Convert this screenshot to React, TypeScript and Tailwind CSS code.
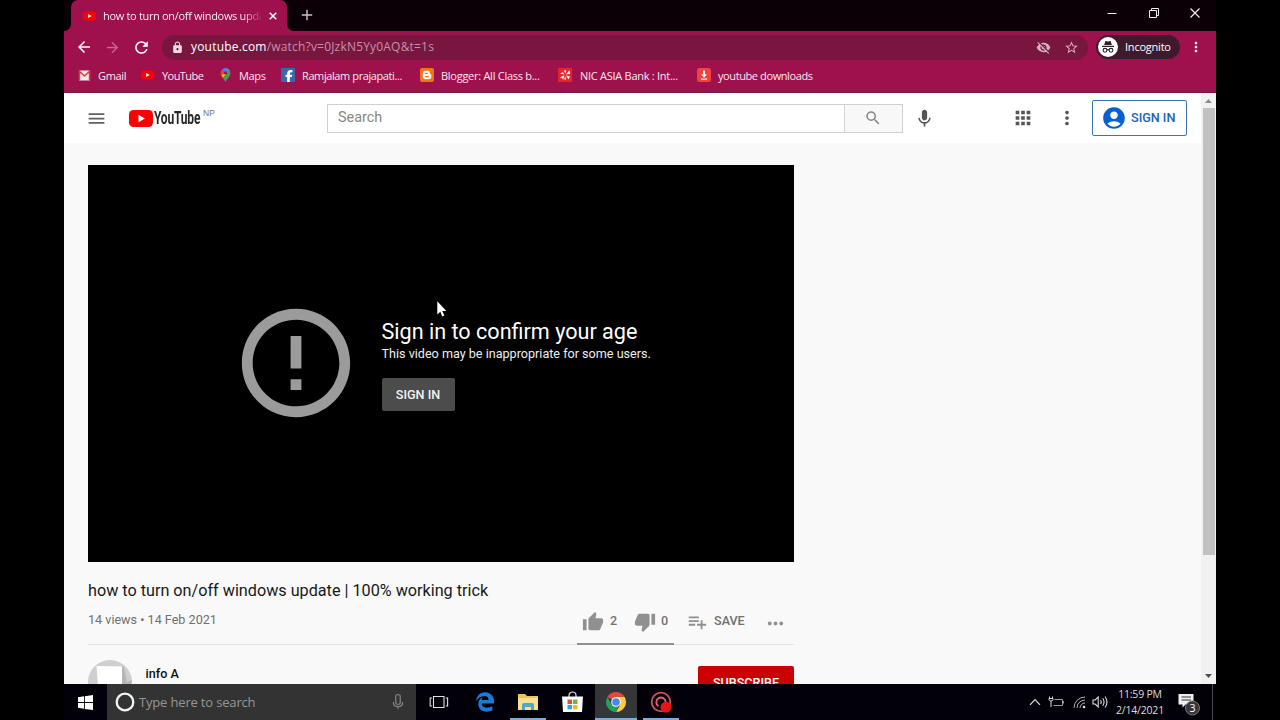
import type { ReactNode } from "react";
import {
  MdAccountCircle,
  MdApps,
  MdArrowBack,
  MdArrowForward,
  MdErrorOutline,
  MdLock,
  MdMenu,
  MdMic,
  MdMoreHoriz,
  MdMoreVert,
  MdPlaylistAdd,
  MdRefresh,
  MdSearch,
  MdStarBorder,
  MdThumbDown,
  MdThumbUp,
  MdVisibilityOff,
} from "react-icons/md";
import { FaEdgeLegacy, FaFacebookF } from "react-icons/fa6";

function PlayBadge({ className }: { className: string }) {
  return (
    <svg viewBox="0 0 24 17" className={className}>
      <rect width="24" height="17" rx="4.5" fill="#f00" />
      <path d="M9.5 4.8v7.4l6.4-3.7z" fill="#fff" />
    </svg>
  );
}

function GmailIcon() {
  return (
    <svg viewBox="0 0 14 12" className="h-[11px] w-[13px]">
      <rect x="1" y="0.5" width="12" height="11" rx="1" fill="#f3ebea" />
      <path d="M1.5 11V1.5L7 6.5l5.5-5V11" fill="none" stroke="#c9463f" strokeWidth="1.7" />
    </svg>
  );
}

function MapsIcon() {
  return (
    <svg viewBox="0 0 12 16" className="h-[14px] w-[11px]">
      <path d="M6 0a5.6 5.6 0 0 0-4.3 2L6 5.6 9.3 1A5.6 5.6 0 0 0 6 0z" fill="#4285f4" />
      <path d="M1.7 2A5.6 5.6 0 0 0 .4 5.6c0 1 .3 2 .7 2.8L6 5.6z" fill="#ea4335" />
      <path d="M1.1 8.4c.5 1 1.2 2 2 3L9.5 4 6 5.6z" fill="#fbbc04" />
      <path d="M11 3.2 3.1 11.4C4.4 13 5.2 14 6 16c1-3.5 5.6-6 5.6-10.4 0-.9-.2-1.7-.6-2.4z" fill="#34a853" />
      <path d="M9.3 1 6 5.6 11 3.2A5.6 5.6 0 0 0 9.3 1z" fill="#5a97f5" />
      <circle cx="6" cy="5.6" r="1.9" fill="#9c1a4c" />
    </svg>
  );
}

function FacebookIcon() {
  return (
    <span className="flex h-[14px] w-[14px] items-end justify-end bg-[#3b66ad] pr-[2px] text-white">
      <FaFacebookF className="h-[12px] w-[8px]" />
    </span>
  );
}

function BloggerIcon() {
  return (
    <svg viewBox="0 0 14 14" className="h-[14px] w-[14px]">
      <rect width="14" height="14" rx="2" fill="#f4731c" />
      <path
        d="M5.5 2.8h2.2a2.2 2.2 0 0 1 2.2 2.2v.7c0 .5.3.6.7.6.5 0 .7.3.7.7v1.6a2.7 2.7 0 0 1-2.7 2.7H5.5A2.7 2.7 0 0 1 2.8 8.600V5.500a2.700 2.700 0 0 1 2.700-2.700z"
        fill="#fff"
      />
      <path d="M5.5 5.400h1.800M5.500 8.600h3" stroke="#f4731c" strokeWidth="1.2" strokeLinecap="round" />
    </svg>
  );
}

function BankIcon() {
  return (
    <svg viewBox="0 0 14 14" className="h-[14px] w-[14px]">
      <rect width="14" height="14" fill="#e5252c" />
      <path d="M6 2.500 8.300 2.200 7.300 5.800z" fill="#fff" />
      <path d="M12 4.300 11.300 2.600 7.800 6.400 12 6z" fill="#fff" />
      <path d="M2 5.500 5 4.200 6.300 6.400z" fill="#fff" />
      <path d="M1.800 9.500 6.300 7.200 5.200 11.500 3.800 9.800z" fill="#fff" />
      <path d="M8 7.500 12 8.500 10.500 11.500zM7 8l1.200 3.500H6.300z" fill="#fff" />
    </svg>
  );
}

function DownloadIcon() {
  return (
    <svg viewBox="0 0 14 14" className="h-[14px] w-[14px]">
      <rect width="14" height="14" rx="2.5" fill="#f0433f" />
      <path d="M6 2.500h2v4h2L7 9.800 4 6.500h2zM4 10.600h6v1.100H4z" fill="#fff" />
    </svg>
  );
}

function IncognitoIcon() {
  return (
    <svg viewBox="0 0 20 20" className="h-5 w-5">
      <circle cx="10" cy="10" r="10" fill="#fff" />
      <path d="M7.300 4 10 4.600l2.700-.6 1.100 3.900H6.200zM4 8.700h12v1.200H4z" fill="#2b2029" />
      <g fill="none" stroke="#2b2029" strokeWidth="1.1">
        <circle cx="7" cy="13.300" r="1.900" />
        <circle cx="13" cy="13.300" r="1.900" />
        <path d="M8.900 13q1.100-.7 2.200 0" />
      </g>
    </svg>
  );
}

function TabStrip() {
  return (
    <div className="flex h-[31px] items-stretch bg-[#0b0005]">
      <svg viewBox="0 0 7 7" className="h-[7px] w-[7px] self-end">
        <path d="M7 0v7H0a7 7 0 0 0 7-7z" fill="#9e114c" />
      </svg>
      <div className="flex w-[216px] items-center rounded-t-[7px] bg-[#9e114c] pl-[12px]">
        <PlayBadge className="h-[10px] w-[13px]" />
        <span className="ml-[7px] w-[158px] overflow-hidden bg-linear-to-r from-white from-88% to-white/10 bg-clip-text text-[11px] leading-[17px] font-medium tracking-[-0.32px] whitespace-nowrap text-transparent">
          how to turn on/off windows update
        </span>
        <svg viewBox="0 0 8 8" className="ml-[8px] h-[8px] w-[8px]">
          <path d="M.7.7l6.6 6.6M7.3.7.7 7.3" stroke="#fff" strokeWidth="1.5" />
        </svg>
      </div>
      <svg viewBox="0 0 7 7" className="h-[7px] w-[7px] self-end">
        <path d="M0 0v7h7a7 7 0 0 1-7-7z" fill="#9e114c" />
      </svg>
      <svg viewBox="0 0 12 12" className="mb-px ml-[7px] h-[12px] w-[12px] self-center">
        <path d="M6 .8v10.400M.8 6h10.400" stroke="#c9c5c8" strokeWidth="1.4" />
      </svg>
      <div className="ml-auto flex items-center pr-[16px] pb-[5px]">
        <svg viewBox="0 0 10 10" className="h-[10px] w-[10px]">
          <path d="M.5 5.500h9" stroke="#eee" />
        </svg>
        <svg viewBox="0 0 10 10" className="ml-[32px] h-[10px] w-[10px]" fill="none" stroke="#eee">
          <path d="M.5 2.500h7v7h-7zM2.500 2.500v-2h7v7h-2" />
        </svg>
        <svg viewBox="0 0 10 10" className="ml-[31px] h-[10px] w-[10px]">
          <path d="M.5.5l9 9M9.500.5l-9 9" stroke="#eee" strokeWidth="1.2" />
        </svg>
      </div>
    </div>
  );
}

function Toolbar() {
  return (
    <div className="flex h-[32px] items-center pl-[11px] text-white">
      <MdArrowBack className="h-[18px] w-[18px]" />
      <MdArrowForward className="ml-[11px] h-[17px] w-[17px] text-[#c9668f]" />
      <MdRefresh className="ml-[11px] h-[19px] w-[19px]" />
      <div className="ml-[11px] flex h-[25px] w-[926px] items-center rounded-full bg-[#78163f] pr-[9px] pl-[9px]">
        <MdLock className="h-[13px] w-[13px] text-[#eddbe3]" />
        <span className="ml-[7px] text-[12px] leading-[18px] tracking-[0.19px] whitespace-nowrap text-[#c491a8]">
          <span className="text-white">youtube.com</span>/watch?v=0JzkN5Yy0AQ&amp;t=1s
        </span>
        <MdVisibilityOff className="ml-auto h-[15px] w-[15px] text-[#d5b0c0]" />
        <MdStarBorder className="ml-[13px] h-[15px] w-[15px] text-[#d5b0c0]" />
      </div>
      <div className="ml-[8px] flex h-[24px] w-[84px] items-center rounded-full bg-[#3f1a2e] pl-[2px]">
        <IncognitoIcon />
        <span className="ml-[7px] text-[11px] leading-[16px] font-medium tracking-[-0.22px]">Incognito</span>
      </div>
      <MdMoreVert className="ml-[8px] h-[16px] w-[16px]" />
    </div>
  );
}

type BookmarkProps = { icon: ReactNode; label: string; box: string; gap: string; tracking: string };

const bookmarks: BookmarkProps[] = [
  { icon: <GmailIcon />, label: "Gmail", box: "w-[63px]", gap: "w-[20px]", tracking: "tracking-[-0.35px]" },
  { icon: <PlayBadge className="h-[10px] w-[13px]" />, label: "YouTube", box: "w-[79px]", gap: "w-[21px]", tracking: "tracking-[-0.55px]" },
  { icon: <MapsIcon />, label: "Maps", box: "w-[61px]", gap: "w-[19px]", tracking: "tracking-[-0.35px]" },
  { icon: <FacebookIcon />, label: "Ramjalam prajapati...", box: "w-[139px]", gap: "w-[21px]", tracking: "tracking-[-0.4px]" },
  { icon: <BloggerIcon />, label: "Blogger: All Class b...", box: "w-[138px]", gap: "w-[21px]", tracking: "tracking-[-0.27px]" },
  { icon: <BankIcon />, label: "NIC ASIA Bank : Int...", box: "w-[139px]", gap: "w-[22px]", tracking: "tracking-[-0.27px]" },
  { icon: <DownloadIcon />, label: "youtube downloads", box: "w-[130px]", gap: "w-[21px]", tracking: "tracking-[-0.4px]" },
];

function BookmarksBar() {
  return (
    <div className="flex h-[30px] items-center border-b border-[#7d1340] pb-[5px] pl-[14px] text-[11px] leading-[17px] font-medium text-[#f7e9ef]">
      {bookmarks.map((b) => (
        <div key={b.label} className={`flex shrink-0 items-center ${b.box}`}>
          <span className={`flex shrink-0 items-center ${b.gap}`}>{b.icon}</span>
          <span className={`whitespace-nowrap ${b.tracking}`}>{b.label}</span>
        </div>
      ))}
    </div>
  );
}

function SiteHeader() {
  return (
    <header className="flex h-[50px] shrink-0 items-center bg-white pl-[22px]">
      <MdMenu className="h-[21px] w-[21px] text-[#606060]" />
      <PlayBadge className="ml-[22px] h-[17px] w-[24px]" />
      <span className="ml-[1px] w-[49px] origin-left scale-x-[0.65] text-[18.5px] leading-[20px] font-bold tracking-[-0.3px] whitespace-nowrap text-[#282828]">
        YouTube
      </span>
      <span className="mt-[-10px] w-[12px] font-['Liberation_Sans',sans-serif] text-[8.5px] leading-[10px] text-[#707070]">NP</span>
      <div className="ml-[112px] flex h-[29px] w-[576px] border border-[#d0d0d0]">
        <span className="flex-1 pl-[10px] text-[14.4px] leading-[26px] text-[#888]">Search</span>
        <span className="flex w-[58px] items-center justify-center border-l border-[#d3d3d3] bg-[#f8f8f8] pr-[2px]">
          <MdSearch className="h-[18px] w-[18px] text-[#888]" />
        </span>
      </div>
      <MdMic className="ml-[11px] h-[21px] w-[21px] text-[#555]" />
      <MdApps className="ml-[77px] h-[22px] w-[22px] text-[#555]" />
      <MdMoreVert className="ml-[22px] h-[22px] w-[22px] text-[#555]" />
      <div className="ml-[14px] flex h-[36px] w-[95px] items-center rounded-[2px] border border-[#3b73b5] pl-[8px] text-[#1b62b8]">
        <MdAccountCircle className="h-[26px] w-[26px] text-[#065fd4]" />
        <span className="ml-[4px] text-[12.6px] leading-[16px] font-medium whitespace-nowrap">SIGN IN</span>
      </div>
    </header>
  );
}

function Player() {
  return (
    <section className="relative flex h-[397px] w-[706px] items-center bg-black pl-[142px]">
      <MdErrorOutline className="mb-px ml-[0.5px] h-[130px] w-[130px] shrink-0 text-[#9b9b9b]" />
      <div className="ml-[21px] flex flex-col items-start pt-[1px] text-white">
        <h2 className="text-[21.6px] leading-[27px] whitespace-nowrap">Sign in to confirm your age</h2>
        <p className="mt-[1px] text-[12.6px] leading-[16px] whitespace-nowrap text-[#eee]">
          This video may be inappropriate for some users.
        </p>
        <button className="mt-[16px] h-[33px] w-[73px] rounded-[2px] bg-[#4c4c4c] text-[12.6px] leading-[33px] font-medium text-[#f3f3f3]">
          SIGN IN
        </button>
      </div>
      <svg viewBox="0 0 10 16" className="absolute top-[136px] left-[349px] h-[16px] w-[10px]">
        <path d="M.3.3v13.2l3-2.800 2 4.700 2-.9-2-4.500h4z" fill="#fff" />
      </svg>
    </section>
  );
}

function VideoInfo() {
  return (
    <div className="w-[706px]">
      <h1 className="mt-[17px] text-[16.2px] leading-[23px] whitespace-nowrap text-[#181818]">
        how to turn on/off windows update | 100% working trick
      </h1>
      <div className="flex h-[43px] items-stretch border-b border-[#e4e4e4] text-[#707070]">
        <span className="pt-[9px] text-[12.6px] leading-[18px] whitespace-nowrap">14 views • 14 Feb 2021</span>
        <div className="-mb-px ml-auto flex w-[97px] items-center border-b-2 border-[#909090] pb-[2px] pl-[5px] text-[12.6px] font-medium">
          <MdThumbUp className="h-[22px] w-[22px] text-[#909090]" />
          <span className="ml-[6px] w-[20px]">2</span>
          <MdThumbDown className="ml-[4px] h-[22px] w-[22px] text-[#909090]" />
          <span className="ml-[5px]">0</span>
        </div>
        <div className="flex w-[120px] items-center pb-[3px] pl-[12px] text-[12.6px] font-medium">
          <MdPlaylistAdd className="h-[22px] w-[22px] text-[#909090]" />
          <span className="ml-[6px]">SAVE</span>
          <MdMoreHoriz className="mt-[3px] ml-[19px] h-[23px] w-[23px] shrink-0 text-[#909090]" />
        </div>
      </div>
      <div className="flex pt-[15px]">
        <svg viewBox="0 0 44 44" className="h-[44px] w-[44px] shrink-0">
          <circle cx="22" cy="22" r="22" fill="#cfcfcf" />
          <path d="M8.500 6 34 6.500V26H10z" fill="#fff" />
          <path d="M34 6.500h1.500L39 22l5-2-2 6h-8z" fill="#b5b5b5" />
        </svg>
        <span className="mt-[6px] ml-[13.5px] text-[12.6px] leading-[16px] font-medium text-[#111]">info A</span>
        <button className="mt-[6px] ml-auto h-[33px] w-[96px] rounded-[2px] bg-[#c00] text-[12.6px] leading-[33px] font-medium text-white">
          SUBSCRIBE
        </button>
      </div>
    </div>
  );
}

function Scrollbar() {
  return (
    <div className="flex w-[15px] shrink-0 flex-col items-center bg-[#f1f1f1]">
      <svg viewBox="0 0 15 15" className="h-[15px] w-[15px]">
        <path d="M4 10h7L7.500 6z" fill="#8b8b8b" />
      </svg>
      <div className="h-[447px] w-[12px] bg-[#c1c1c1]" />
      <svg viewBox="0 0 15 15" className="mt-auto h-[15px] w-[15px]">
        <path d="M4 5h7L7.500 9z" fill="#505050" />
      </svg>
    </div>
  );
}

function FolderIcon() {
  return (
    <svg viewBox="0 0 20 16" className="h-[16px] w-[20px]">
      <path d="M0 0h7l2 2h11v14H0z" fill="#eec35b" />
      <path d="M0 4h20v12H0z" fill="#fbe08f" />
      <path d="M4 16v-5q0-2 2-2h8q2 0 2 2v5h-3v-3H7v3z" fill="#4fa7d0" />
    </svg>
  );
}

function StoreIcon() {
  return (
    <svg viewBox="0 0 21 21" className="h-[21px] w-[21px]">
      <path d="M7 6V4.500a3.500 3.500 0 0 1 7 0V6" fill="none" stroke="#ddd" strokeWidth="1.2" />
      <path d="M0 5.500h21L20 21H1z" fill="#fff" />
      <path d="M5.500 8.500h4.500v4.500H5.500z" fill="#e5502c" />
      <path d="M11 8.500h4.500v4.500H11z" fill="#76b43a" />
      <path d="M5.500 14h4.500v4.300H5.500z" fill="#2e9fe0" />
      <path d="M11 14h4.500v4.300H11z" fill="#f5b51b" />
    </svg>
  );
}

function ChromeIcon() {
  return (
    <svg viewBox="0 0 20 20" className="h-[20px] w-[20px]">
      <path d="M10 10 1.340 5A10 10 0 0 1 18.660 5z" fill="#dd4b3e" />
      <path d="M10 10V5h8.660A10 10 0 0 1 10 20l4.300-7.500z" fill="#fccd3f" />
      <path d="M1.340 5 5.700 12.500 10 14.500l2.500-.5L10 20A10 10 0 0 1 1.340 5z" fill="#23a05a" />
      <circle cx="10" cy="10" r="4.800" fill="#fff" />
      <circle cx="10" cy="10" r="3.800" fill="#4587ee" />
    </svg>
  );
}

function RecorderIcon() {
  return (
    <svg viewBox="0 0 24 24" className="h-[24px] w-[24px]">
      <circle cx="12" cy="12" r="9.300" fill="none" stroke="#d6505c" strokeWidth="1.8" />
      <path d="M9.500 16.200A4.700 4.700 0 1 1 16.700 12" fill="none" stroke="#e0606a" strokeWidth="1.9" />
      <circle cx="17" cy="17.200" r="5.500" fill="#e81414" />
    </svg>
  );
}

function TaskButton({ children, frame }: { children: ReactNode; frame: string }) {
  return <div className={`flex h-full shrink-0 items-center justify-center border-b-2 pt-[2px] ${frame}`}>{children}</div>;
}

function Taskbar() {
  return (
    <div className="flex h-[36px] shrink-0 items-center bg-[#02010a]">
      <div className="flex w-[43px] justify-center">
        <svg viewBox="0 0 16 16" className="h-[15px] w-[15px]" fill="#fff">
          <path d="M0 2.300 6.500 1.400v6.100H0zM7.400 1.300 16 0v7.500H7.400zM0 8.400h6.500v6.200L0 13.700zM7.400 8.400H16V16l-8.600-1.200z" />
        </svg>
      </div>
      <div className="flex h-full w-[309px] items-center bg-[#333] pl-[8px]">
        <svg viewBox="0 0 20 20" className="h-[20px] w-[20px]">
          <circle cx="10" cy="10" r="8.300" fill="none" stroke="#f4f4f4" strokeWidth="2.3" />
        </svg>
        <span className="ml-[4px] text-[13px] leading-[18px] tracking-[-0.17px] whitespace-nowrap text-[#969696]">
          Type here to search
        </span>
        <svg viewBox="0 0 12 16" className="mr-[12px] ml-auto h-[16px] w-[12px]" fill="none" stroke="#8d8d8d" strokeWidth="1.1">
          <rect x="3.800" y=".8" width="4.400" height="9.400" rx="1.200" />
          <path d="M1.500 8v1.500q0 3 4.500 3t4.500-3V8M6 12.500V15" />
        </svg>
      </div>
      <TaskButton frame="w-[45px] border-transparent">
        <svg viewBox="0 0 20 14" className="h-[14px] w-[20px]" fill="none" stroke="#e0e0e0" strokeWidth="1.1">
          <path d="M4.500 1.500h10.500v11H4.500zM3 3H1.200v8H3M16.800 3h1.800v8h-1.800" />
        </svg>
      </TaskButton>
      <TaskButton frame="w-[47px] border-transparent">
        <FaEdgeLegacy className="h-[20px] w-[20px] text-[#1a7ad9]" />
      </TaskButton>
      <TaskButton frame="ml-[2px] w-[36px] border-[#78aee0]">
        <FolderIcon />
      </TaskButton>
      <TaskButton frame="w-[49px] border-transparent pb-[2px] pl-[3px]">
        <StoreIcon />
      </TaskButton>
      <TaskButton frame="w-[42px] border-[#78aee0] bg-[#34363a]">
        <ChromeIcon />
      </TaskButton>
      <TaskButton frame="ml-[6px] w-[36px] border-[#78aee0]">
        <RecorderIcon />
      </TaskButton>
      <div className="ml-auto flex h-full items-center text-[#ddd]">
        <svg viewBox="0 0 12 8" className="h-[8px] w-[12px]" fill="none" stroke="currentColor" strokeWidth="1.2">
          <path d="M1 6.800 6 1.500l5 5.300" />
        </svg>
        <svg viewBox="0 0 16 12" className="ml-[7px] h-[12px] w-[16px]" fill="none" stroke="currentColor">
          <path d="M6.500 3.500h8v6h-9M14.500 5.500h1v2" strokeOpacity=".7" />
          <path d="M1.500.5v2M4.500.5v2M3 5v6" />
          <path d="M1 2.500h4v1.200L3.800 5H2.200L1 3.700z" />
        </svg>
        <svg viewBox="0 0 13 13" className="ml-[9px] h-[13px] w-[13px]" fill="none" stroke="currentColor">
          <path d="M1 12A11 11 0 0 1 12 1M4 12a8 8 0 0 1 8-8M7 12a5 5 0 0 1 5-5" strokeOpacity=".8" />
          <circle cx="11" cy="11" r="1.300" fill="currentColor" stroke="none" />
        </svg>
        <svg viewBox="0 0 17 14" className="ml-[6px] h-[14px] w-[17px]" fill="none" stroke="currentColor" strokeWidth="1.1">
          <path d="M1 5h2.200l3-3v10l-3-3H1zM8.500 5q1.400 2 0 4M10.800 3.300q2.500 3.700 0 7.400M13 1.500q4 5.500 0 11" />
        </svg>
        <div className="ml-[5px] flex w-[52px] flex-col items-center text-[10.5px] leading-[16px] tracking-[-0.2px] whitespace-nowrap">
          <span>11:59 PM</span>
          <span>2/14/2021</span>
        </div>
        <svg viewBox="0 0 24 24" className="mt-[3px] ml-[12px] h-[24px] w-[24px]">
          <path d="M.5 2h15v10.500H7.500L4.500 15.500v-3h-4z" fill="#f0f0f0" />
          <path d="M3.500 5h9.500M3.500 8h9.500" stroke="#333" />
          <circle cx="14.500" cy="16" r="7" fill="#37373b" stroke="#777" />
          <text x="14.500" y="20" textAnchor="middle" fontSize="10.500" fill="#fff">3</text>
        </svg>
        <div className="ml-[10px] h-full w-[4px] border-l border-[#4a4a4e]" />
      </div>
    </div>
  );
}

export default function App() {
  return (
    <div className="flex h-[720px] w-[1280px] justify-center overflow-hidden bg-black">
      <div className="flex w-[1152px] flex-col font-['Open_Sans','Noto_Sans',sans-serif]">
        <TabStrip />
        <div className="bg-[#9e114c]">
          <Toolbar />
          <BookmarksBar />
        </div>
        <div className="flex h-[591px] overflow-hidden bg-[#f9f9f9] font-['Roboto',sans-serif]">
          <div className="flex flex-1 flex-col">
            <SiteHeader />
            <main className="pt-[22px] pl-[24px]">
              <Player />
              <VideoInfo />
            </main>
          </div>
          <Scrollbar />
        </div>
        <Taskbar />
      </div>
    </div>
  );
}
